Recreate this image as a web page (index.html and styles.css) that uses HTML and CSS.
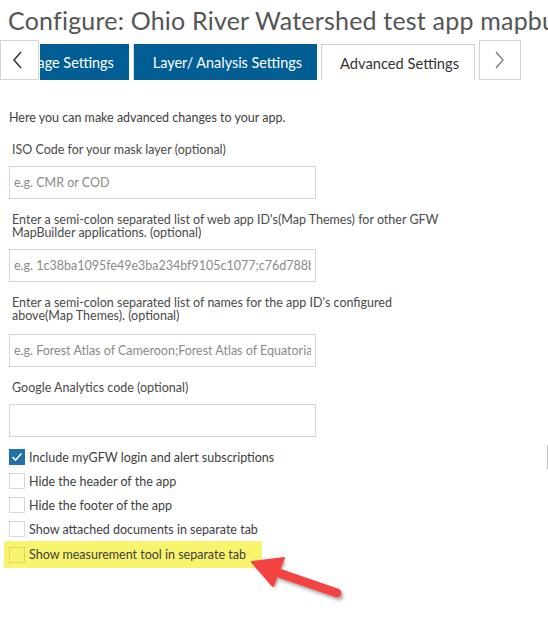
FILE: index.html
```html
<!DOCTYPE html>
<html lang="en">
<head>
<meta charset="utf-8">
<title>Configure</title>
<link rel="stylesheet" href="styles.css">
</head>
<body>
<div class="page">
  <h1 class="title">Configure: Ohio River Watershed test app mapbuilder</h1>
  <nav class="tabnav">
    <button class="nav-btn nav-prev" aria-label="Previous">
      <svg width="14" height="22" viewBox="0 0 14 22"><path d="M10 3 L3 11 L10 19" fill="none" stroke="#333" stroke-width="1.5"/></svg>
    </button>
    <div class="tab-viewport">
      <div class="tab tab-blue">Language Settings</div>
      <div class="tab tab-blue">Layer/ Analysis Settings</div>
      <div class="tab tab-active">Advanced Settings</div>
    </div>
    <button class="nav-btn nav-next" aria-label="Next">
      <svg width="14" height="22" viewBox="0 0 14 22"><path d="M3 3 L10 11 L3 19" fill="none" stroke="#7a7a7a" stroke-width="1.3"/></svg>
    </button>
  </nav>

  <section class="content">
    <p class="intro">Here you can make advanced changes to your app.</p>

    <div class="field">
      <label class="label">ISO Code for your mask layer (optional)</label>
      <input class="input" type="text" placeholder="e.g. CMR or COD">
    </div>
    <div class="field">
      <label class="label">Enter a semi-colon separated list of web app ID's(Map Themes) for other GFW MapBuilder applications. (optional)</label>
      <input class="input" type="text" placeholder="e.g. 1c38ba1095fe49e3ba234bf9105c1077;c76d788b7487476bae4d09a4e933be19">
    </div>
    <div class="field">
      <label class="label label-narrow">Enter a semi-colon separated list of names for the app ID's configured above(Map Themes). (optional)</label>
      <input class="input" type="text" placeholder="e.g. Forest Atlas of Cameroon;Forest Atlas of Equatorial Guinea">
    </div>
    <div class="field">
      <label class="label">Google Analytics code (optional)</label>
      <input class="input" type="text">
    </div>

    <ul class="checks">
      <li class="check"><span class="box box-on"><svg width="12" height="10" viewBox="0 0 12 10"><path d="M1.5 5.2 L4.5 8 L10.5 1.5" fill="none" stroke="#fff" stroke-width="1.6"/></svg></span>Include myGFW login and alert subscriptions</li>
      <li class="check"><span class="box"></span>Hide the header of the app</li>
      <li class="check"><span class="box"></span>Hide the footer of the app</li>
      <li class="check"><span class="box"></span>Show attached documents in separate tab</li>
      <li class="check check-hl"><span class="box"></span>Show measurement tool in separate tab</li>
    </ul>
  </section>

  <svg class="arrow" width="110" height="62" viewBox="0 0 110 62">
    <defs>
      <filter id="sh" x="-20%" y="-20%" width="140%" height="160%"><feGaussianBlur stdDeviation="1.6"/></filter>
    </defs>
    <g filter="url(#sh)" opacity="0.45" transform="translate(2,3)">
      <line x1="36" y1="27" x2="97" y2="48" stroke="#555" stroke-width="9" stroke-linecap="round"/>
      <polygon points="12,17 44,13 33,41" fill="#555"/>
    </g>
    <line x1="36" y1="27" x2="97" y2="48" stroke="#f44343" stroke-width="9" stroke-linecap="round"/>
    <polygon points="12,17 44,13 33,41" fill="#f44343" stroke="#f44343" stroke-width="2" stroke-linejoin="round"/>
  </svg>
  <span class="edge-line"></span>
</div>
</body>
</html>
```

FILE: styles.css
```css
* { box-sizing: border-box; }
html, body { margin: 0; padding: 0; background: #fff; }
body {
  font-family: Lato, "Open Sans", Arial, sans-serif;
  color: #3c3c3c;
  width: 548px;
  height: 628px;
  overflow: hidden;
}
.page { position: relative; width: 548px; height: 628px; overflow: hidden; }

.title {
  margin: 0;
  padding: 5px 0 0 8px;
  font-size: 25px;
  line-height: 30px;
  font-weight: 400;
  color: #555;
  white-space: nowrap;
  letter-spacing: 0.2px;
}

.tabnav {
  display: flex;
  align-items: flex-end;
  margin-top: 5px;
  height: 40px;
}
.nav-btn {
  display: flex;
  align-items: center;
  justify-content: center;
  height: 40px;
  padding: 0;
  background: #fff;
  border: 1px solid #d4d4d4;
  flex: none;
}
.nav-prev { width: 39px; margin-right: 1px; padding-right: 4px; }
.nav-next { width: 42px; }
.tab-viewport {
  display: flex;
  justify-content: flex-end;
  gap: 4px;
  width: 439px;
  flex: none;
  overflow: hidden;
  padding-right: 4px;
  height: 36px;
}
.tab {
  flex: none;
  height: 36px;
  display: flex;
  align-items: center;
  padding: 0 15px 0 19px;
  font-size: 14.4px;
  white-space: nowrap;
}
.tab-blue {
  background: #005e95;
  color: #fff;
  border-left: 1px solid #d6d6d6;
}
.tab-active {
  background: #fff;
  color: #333;
  border: 1px solid #cfcfcf;
  border-bottom: none;
  padding: 0 15px 0 18px;
  font-size: 14.7px;
}

.content { padding: 30px 0 0 9px; }
.intro {
  margin: 0 0 17px 0;
  font-size: 12.5px;
  line-height: 16px;
  color: #404040;
}
.field { margin: 0 0 14px 2px; width: 460px; }
.label {
  display: block;
  font-size: 12.5px;
  line-height: 13px;
  color: #4a4a4a;
  margin-bottom: 10px;
  padding-left: 1px;
}
.label-narrow { width: 400px; margin-bottom: 12px; }
.field:last-of-type { margin-bottom: 8px; }
.input {
  display: block;
  width: 307px;
  height: 33px;
  margin-left: -2px;
  border: 1px solid #d6d6d6;
  padding: 0 4px;
  font-family: inherit;
  font-size: 12.5px;
  color: #333;
  background: #fff;
  outline: none;
}
.input::placeholder { color: #8a8a8a; }

.checks { list-style: none; margin: 0; padding: 0; }
.check {
  display: flex;
  align-items: center;
  height: 24px;
  font-size: 12.5px;
  color: #3e3e3e;
}
.box {
  width: 16px;
  height: 16px;
  border: 1px solid #d8d8d8;
  margin-right: 4px;
  flex: none;
  display: flex;
  align-items: center;
  justify-content: center;
}
.box-on { background: #2070ac; border-color: #2070ac; }
.check-hl {
  background: #f8f46e;
  margin-left: -5px;
  padding-left: 5px;
  width: 258px;
  height: 27px;
}
.check-hl .box { border-color: #dcd66a; }

.arrow { position: absolute; left: 240px; top: 545px; }
.edge-line {
  position: absolute;
  left: 547px;
  top: 445px;
  width: 1px;
  height: 24px;
  background: #bdbdbd;
}
```
